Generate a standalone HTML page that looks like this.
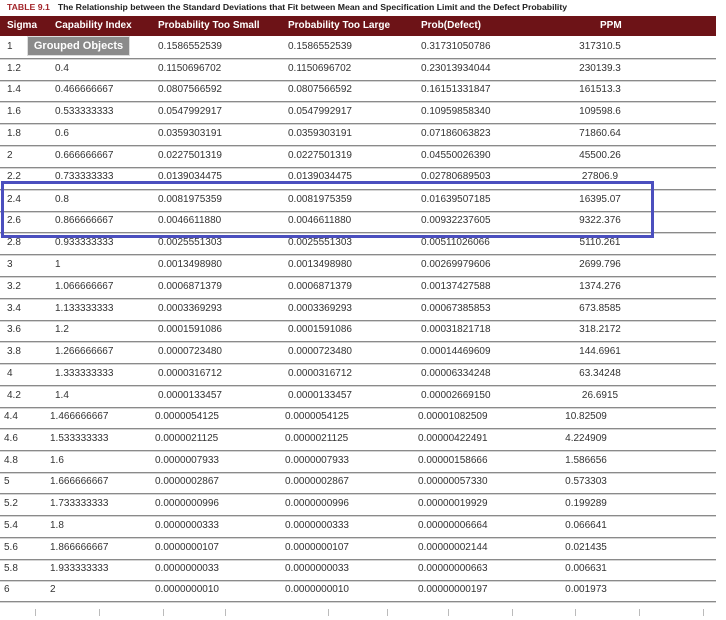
<!DOCTYPE html>
<html><head><meta charset="utf-8"><style>
body{margin:0;width:726px;height:620px;background:#fff;font-family:"Liberation Sans",sans-serif;position:relative;overflow:hidden;color:#333}
.t{position:absolute;top:2px;left:7px;font-size:8.7px;font-weight:bold;color:#222;white-space:nowrap}
.t b{color:#a3262b;margin-right:8px}
.h{position:absolute;top:16px;left:0;width:716px;height:20px;background:#6d1317;color:#fff;font-size:10px;font-weight:bold}
.h span,.r span{position:absolute;white-space:nowrap}
.h span{top:4px}
.r{position:absolute;left:0;width:716px;height:14px;font-size:10px;line-height:14px}
.r span.p{width:100px;text-align:center;left:550px}
.l{position:absolute;left:0;width:716px;height:1px;background:#8a8a8a;border-bottom:1px solid #d4d4d4}
.a span:nth-child(1){left:7px}.a span:nth-child(2){left:55px}.a span:nth-child(3){left:158px}.a span:nth-child(4){left:288px}.a span:nth-child(5){left:421px}
.b span:nth-child(1){left:4px}.b span:nth-child(2){left:50px}.b span:nth-child(3){left:155px}.b span:nth-child(4){left:285px}.b span:nth-child(5){left:418px}
.b span.p{left:536px}
.tick{position:absolute;top:609px;width:1px;height:7px;background:#bbb}
</style></head><body>
<div class="t"><b>TABLE 9.1</b>The Relationship between the Standard Deviations that Fit between Mean and Specification Limit and the Defect Probability</div>
<div class="h"><span style="left:7px">Sigma</span><span style="left:55px">Capability Index</span><span style="left:158px">Probability Too Small</span><span style="left:288px">Probability Too Large</span><span style="left:421px">Prob(Defect)</span><span style="left:600px">PPM</span></div>

<div class="r a" style="top:40px"><span>1</span><span>0.333333333</span><span>0.1586552539</span><span>0.1586552539</span><span>0.31731050786</span><span class="p">317310.5</span></div>
<div class="l" style="top:58px"></div>
<div class="r a" style="top:62px"><span>1.2</span><span>0.4</span><span>0.1150696702</span><span>0.1150696702</span><span>0.23013934044</span><span class="p">230139.3</span></div>
<div class="l" style="top:80px"></div>
<div class="r a" style="top:83px"><span>1.4</span><span>0.466666667</span><span>0.0807566592</span><span>0.0807566592</span><span>0.16151331847</span><span class="p">161513.3</span></div>
<div class="l" style="top:101px"></div>
<div class="r a" style="top:105px"><span>1.6</span><span>0.533333333</span><span>0.0547992917</span><span>0.0547992917</span><span>0.10959858340</span><span class="p">109598.6</span></div>
<div class="l" style="top:123px"></div>
<div class="r a" style="top:127px"><span>1.8</span><span>0.6</span><span>0.0359303191</span><span>0.0359303191</span><span>0.07186063823</span><span class="p">71860.64</span></div>
<div class="l" style="top:145px"></div>
<div class="r a" style="top:149px"><span>2</span><span>0.666666667</span><span>0.0227501319</span><span>0.0227501319</span><span>0.04550026390</span><span class="p">45500.26</span></div>
<div class="l" style="top:167px"></div>
<div class="r a" style="top:170px;height:9px;overflow:hidden"><span>2.2</span><span>0.733333333</span><span>0.0139034475</span><span>0.0139034475</span><span>0.02780689503</span><span class="p">27806.9</span></div>
<div class="l" style="top:189px"></div>
<div class="r a" style="top:193px"><span>2.4</span><span>0.8</span><span>0.0081975359</span><span>0.0081975359</span><span>0.01639507185</span><span class="p">16395.07</span></div>
<div class="l" style="top:211px"></div>
<div class="r a" style="top:214px"><span>2.6</span><span>0.866666667</span><span>0.0046611880</span><span>0.0046611880</span><span>0.00932237605</span><span class="p">9322.376</span></div>
<div class="l" style="top:232px"></div>
<div class="r a" style="top:236px"><span>2.8</span><span>0.933333333</span><span>0.0025551303</span><span>0.0025551303</span><span>0.00511026066</span><span class="p">5110.261</span></div>
<div class="l" style="top:254px"></div>
<div class="r a" style="top:258px"><span>3</span><span>1</span><span>0.0013498980</span><span>0.0013498980</span><span>0.00269979606</span><span class="p">2699.796</span></div>
<div class="l" style="top:276px"></div>
<div class="r a" style="top:280px"><span>3.2</span><span>1.066666667</span><span>0.0006871379</span><span>0.0006871379</span><span>0.00137427588</span><span class="p">1374.276</span></div>
<div class="l" style="top:298px"></div>
<div class="r a" style="top:302px"><span>3.4</span><span>1.133333333</span><span>0.0003369293</span><span>0.0003369293</span><span>0.00067385853</span><span class="p">673.8585</span></div>
<div class="l" style="top:320px"></div>
<div class="r a" style="top:323px"><span>3.6</span><span>1.2</span><span>0.0001591086</span><span>0.0001591086</span><span>0.00031821718</span><span class="p">318.2172</span></div>
<div class="l" style="top:341px"></div>
<div class="r a" style="top:345px"><span>3.8</span><span>1.266666667</span><span>0.0000723480</span><span>0.0000723480</span><span>0.00014469609</span><span class="p">144.6961</span></div>
<div class="l" style="top:363px"></div>
<div class="r a" style="top:367px"><span>4</span><span>1.333333333</span><span>0.0000316712</span><span>0.0000316712</span><span>0.00006334248</span><span class="p">63.34248</span></div>
<div class="l" style="top:385px"></div>
<div class="r a" style="top:389px"><span>4.2</span><span>1.4</span><span>0.0000133457</span><span>0.0000133457</span><span>0.00002669150</span><span class="p">26.6915</span></div>
<div class="l" style="top:407px"></div>
<div class="r b" style="top:410px"><span>4.4</span><span>1.466666667</span><span>0.0000054125</span><span>0.0000054125</span><span>0.00001082509</span><span class="p">10.82509</span></div>
<div class="l" style="top:428px"></div>
<div class="r b" style="top:432px"><span>4.6</span><span>1.533333333</span><span>0.0000021125</span><span>0.0000021125</span><span>0.00000422491</span><span class="p">4.224909</span></div>
<div class="l" style="top:450px"></div>
<div class="r b" style="top:454px"><span>4.8</span><span>1.6</span><span>0.0000007933</span><span>0.0000007933</span><span>0.00000158666</span><span class="p">1.586656</span></div>
<div class="l" style="top:472px"></div>
<div class="r b" style="top:475px"><span>5</span><span>1.666666667</span><span>0.0000002867</span><span>0.0000002867</span><span>0.00000057330</span><span class="p">0.573303</span></div>
<div class="l" style="top:493px"></div>
<div class="r b" style="top:497px"><span>5.2</span><span>1.733333333</span><span>0.0000000996</span><span>0.0000000996</span><span>0.00000019929</span><span class="p">0.199289</span></div>
<div class="l" style="top:515px"></div>
<div class="r b" style="top:519px"><span>5.4</span><span>1.8</span><span>0.0000000333</span><span>0.0000000333</span><span>0.00000006664</span><span class="p">0.066641</span></div>
<div class="l" style="top:537px"></div>
<div class="r b" style="top:541px"><span>5.6</span><span>1.866666667</span><span>0.0000000107</span><span>0.0000000107</span><span>0.00000002144</span><span class="p">0.021435</span></div>
<div class="l" style="top:559px"></div>
<div class="r b" style="top:562px"><span>5.8</span><span>1.933333333</span><span>0.0000000033</span><span>0.0000000033</span><span>0.00000000663</span><span class="p">0.006631</span></div>
<div class="l" style="top:580px"></div>
<div class="r b" style="top:583px"><span>6</span><span>2</span><span>0.0000000010</span><span>0.0000000010</span><span>0.00000000197</span><span class="p">0.001973</span></div>
<div class="l" style="top:601px"></div>

<div style="position:absolute;left:1px;top:181px;width:647px;height:51px;border:3px solid #4b4fbe"></div>
<div style="position:absolute;left:27px;top:36px;width:101px;height:18px;background:#8b8b8b;border:1px solid #ddd;color:#fff;font-size:11px;font-weight:bold;line-height:18px;text-align:center">Grouped Objects</div>

<div class="tick" style="left:35px"></div><div class="tick" style="left:99px"></div><div class="tick" style="left:163px"></div><div class="tick" style="left:225px"></div><div class="tick" style="left:328px"></div><div class="tick" style="left:387px"></div><div class="tick" style="left:448px"></div><div class="tick" style="left:512px"></div><div class="tick" style="left:575px"></div><div class="tick" style="left:639px"></div><div class="tick" style="left:703px"></div>
</body></html>
